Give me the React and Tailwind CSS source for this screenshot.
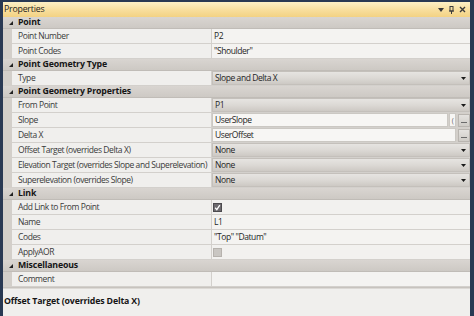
import React from 'react';

const font = { fontFamily: '"Open Sans", "Noto Sans", sans-serif' };

const sections = [
  {
    name: 'Point',
    rows: [
      { label: 'Point Number', value: 'P2', kind: 'text' },
      { label: 'Point Codes', value: '"Shoulder"', kind: 'text' },
    ],
  },
  {
    name: 'Point Geometry Type',
    rows: [{ label: 'Type', value: 'Slope and Delta X', kind: 'select' }],
  },
  {
    name: 'Point Geometry Properties',
    rows: [
      { label: 'From Point', value: 'P1', kind: 'select' },
      { label: 'Slope', value: 'UserSlope', kind: 'slope' },
      { label: 'Delta X', value: 'UserOffset', kind: 'ellipsis' },
      { label: 'Offset Target (overrides Delta X)', value: 'None', kind: 'select' },
      { label: 'Elevation Target (overrides Slope and Superelevation)', value: 'None', kind: 'select' },
      { label: 'Superelevation (overrides Slope)', value: 'None', kind: 'select' },
    ],
  },
  {
    name: 'Link',
    rows: [
      { label: 'Add Link to From Point', kind: 'check' },
      { label: 'Name', value: 'L1', kind: 'text' },
      { label: 'Codes', value: '"Top" "Datum"', kind: 'text' },
      { label: 'ApplyAOR', kind: 'uncheck' },
    ],
  },
  {
    name: 'Miscellaneous',
    rows: [{ label: 'Comment', value: '', kind: 'text' }],
  },
];

function Arrow() {
  return (
    <svg width="5" height="3" viewBox="0 0 5 3" className="shrink-0">
      <polygon points="0,0 5,0 2.5,3" fill="#1a1a1a" />
    </svg>
  );
}

function EllipsisButton() {
  return (
    <div className="w-[12px] h-[13px] ml-[2px] bg-gradient-to-b from-[#e4e2df] to-[#cfccc7] border border-[#b9b5b0] flex items-end justify-center pb-[3px] shrink-0">
      <span className="w-[6px] h-px bg-[#6b6b6b]" />
    </div>
  );
}

function Value({ row }) {
  if (row.kind === 'select') {
    return (
      <div className="flex-1 h-full flex items-center justify-between pl-[2px] pr-[3px] bg-gradient-to-b from-[#e6e4e1] via-[#dcd9d5] to-[#cdc9c4] border border-[#c4c0bb] text-[#1f1f1f]">
        <span>{row.value}</span>
        <Arrow />
      </div>
    );
  }
  if (row.kind === 'slope') {
    return (
      <div className="flex-1 h-full flex items-center">
        <div className="flex-1 h-full flex items-center pl-[2px] bg-[#f7f6f4] border border-[#cbc8c3] text-[#1f1f1f]">
          {row.value}
        </div>
        <div className="w-[7px] h-full bg-[#f7f6f4] border border-[#cbc8c3] ml-px flex items-center justify-center text-[#666] text-[7px]">
          (
        </div>
        <EllipsisButton />
      </div>
    );
  }
  if (row.kind === 'ellipsis') {
    return (
      <div className="flex-1 h-full flex items-center">
        <div className="flex-1 h-full flex items-center pl-[2px] bg-[#f7f6f4] border border-[#cbc8c3] text-[#1f1f1f]">
          {row.value}
        </div>
        <EllipsisButton />
      </div>
    );
  }
  if (row.kind === 'check' || row.kind === 'uncheck') {
    const on = row.kind === 'check';
    return (
      <div className="flex-1 h-full flex items-center pl-px bg-[#f2f1ef]">
        <div
          className={
            on
              ? 'w-[9px] h-[9px] bg-[#6d6a6e] border border-[#4c4a4e] flex items-center justify-center'
              : 'w-[9px] h-[9px] bg-[#c9c6c2] border border-[#b6b2ad]'
          }
        >
          {on && (
            <svg width="7" height="7" viewBox="0 0 7 7">
              <path d="M1.2 3.8 L2.8 5.6 L5.8 1.2" stroke="#fff" strokeWidth="1.3" fill="none" />
            </svg>
          )}
        </div>
      </div>
    );
  }
  return (
    <div className="flex-1 h-full flex items-center pl-[2px] bg-[#f4f3f1] text-[#1f1f1f]">{row.value}</div>
  );
}

function Header({ name }) {
  return (
    <div className="h-[12px] flex items-center bg-gradient-to-b from-[#d9d5d1] to-[#cdc9c4] border-b border-[#c0bcb7]">
      <div className="w-[10px] flex justify-end">
        <svg width="4" height="4" viewBox="0 0 4 4">
          <polygon points="4,0 4,4 0,4" fill="#222" />
        </svg>
      </div>
      <span className="font-bold text-[8.75px] tracking-[-0.15px] text-[#151515] pl-[5px] leading-none whitespace-nowrap">{name}</span>
    </div>
  );
}

function Row({ row }) {
  return (
    <div className="h-[15px] flex bg-[#d3cfca]">
      <div className="w-[9px] shrink-0" />
      <div className="w-[199px] shrink-0 flex items-center pl-[6px] bg-[#f0efed] border-b border-[#d3d0cc] text-[#3a3a3a] whitespace-nowrap overflow-hidden">
        {row.label}
      </div>
      <div className="w-px bg-[#d3d0cc]" />
      <div className="flex-1 flex border-b border-[#d3d0cc]">
        <Value row={row} />
      </div>
    </div>
  );
}

export default function App() {
  return (
    <div className="w-[474px] h-[316px] bg-[#293953] pt-[2px] pl-[3px] pr-[4px] flex flex-col overflow-hidden" style={font}>
      <div className="h-[15px] shrink-0 flex items-center justify-between bg-gradient-to-b from-[#fdf0c6] via-[#f8df9f] to-[#f3d283] px-[1px]">
        <span className="text-[8.75px] tracking-[-0.2px] text-[#1b1b1b] leading-none">Properties</span>
        <div className="flex items-center gap-[5px] pr-[3px]">
          <svg width="6" height="4" viewBox="0 0 6 4">
            <polygon points="0,0 6,0 3,4" fill="#3a3a3a" />
          </svg>
          <svg width="5" height="8" viewBox="0 0 5 8">
            <rect x="1" y="0.5" width="3" height="4.5" fill="none" stroke="#3a3a3a" />
            <line x1="0" y1="5" x2="5" y2="5" stroke="#3a3a3a" />
            <line x1="2.5" y1="5" x2="2.5" y2="8" stroke="#3a3a3a" />
          </svg>
          <svg width="7" height="7" viewBox="0 0 7 7">
            <path d="M1 1 L6 6 M6 1 L1 6" stroke="#3a3a3a" strokeWidth="1.4" />
          </svg>
        </div>
      </div>
      <div className="flex flex-col text-[8.5px] tracking-[-0.42px] leading-none bg-[#d3cfca]">
        {sections.map(s => (
          <React.Fragment key={s.name}>
            <Header name={s.name} />
            {s.rows.map(r => (
              <Row key={r.label} row={r} />
            ))}
          </React.Fragment>
        ))}
      </div>
      <div className="h-px bg-[#c7c3be]" />
      <div className="flex-1 bg-[#f0efed] border-t border-[#dcd9d5] pt-[8px] pl-px text-[8.75px] leading-none">
        <span className="font-bold tracking-[-0.15px] text-[#151515]">Offset Target (overrides Delta X)</span>
      </div>
    </div>
  );
}
